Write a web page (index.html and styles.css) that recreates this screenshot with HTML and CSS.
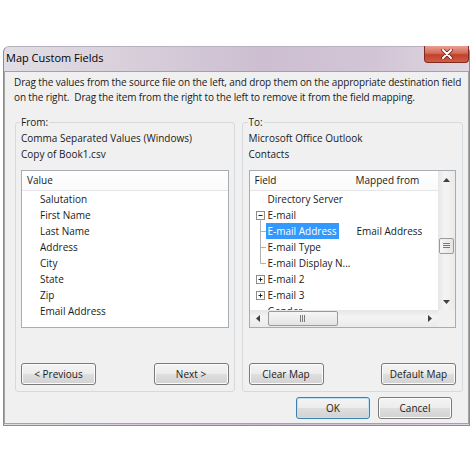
FILE: index.html
```html
<!DOCTYPE html>
<html>

<head>
    <meta charset="utf-8" />
    <title>Map Custom Fields</title>
    <meta name="viewport" content="width=device-width, initial-scale=1">
    <link rel="stylesheet" href="styles.css">
</head>

<body>
    <div class="window">
        <div class="titlebar">
            <span class="title">Map Custom Fields</span>
            <button class="close" title="Close">
                <svg width="12" height="10" viewBox="0 0 12 10">
                    <path d="M2 1 L10 9 M10 1 L2 9" stroke="#5b1b14" stroke-width="3.4" stroke-linecap="round" />
                    <path d="M2 1 L10 9 M10 1 L2 9" stroke="#fff" stroke-width="2" stroke-linecap="round" />
                </svg>
            </button>
        </div>

        <div class="client">
            <p class="intro">
                Drag the values from the source file on the left, and drop them on the appropriate destination field<br>
                on the right.&nbsp; Drag the item from the right to the left to remove it from the field mapping.
            </p>

            <div class="groups">
                <!-- source side -->
                <fieldset class="group group-from">
                    <legend>From:</legend>
                    <div class="source">Comma Separated Values (Windows)</div>
                    <div class="source">Copy of Book1.csv</div>
                    <div class="listbox values">
                        <div class="list-head">
                            <span class="head-cell">Value</span>
                        </div>
                        <ul class="items">
                            <li>Salutation</li>
                            <li>First Name</li>
                            <li>Last Name</li>
                            <li>Address</li>
                            <li>City</li>
                            <li>State</li>
                            <li>Zip</li>
                            <li>Email Address</li>
                        </ul>
                    </div>
                    <div class="group-buttons">
                        <button class="btn">&lt; Previous</button>
                        <button class="btn">Next &gt;</button>
                    </div>
                </fieldset>

                <!-- destination side -->
                <fieldset class="group group-to">
                    <legend>To:</legend>
                    <div class="source">Microsoft Office Outlook</div>
                    <div class="source">Contacts</div>
                    <div class="listbox tree">
                        <div class="tree-view">
                            <div class="list-head">
                                <span class="head-cell field-col">Field</span>
                                <span class="head-cell map-col">Mapped from</span>
                            </div>
                            <div class="row">
                                <div class="field-cell"><span class="twig"></span><span class="label">Directory Server</span></div>
                            </div>
                            <div class="row">
                                <div class="field-cell">
                                    <span class="twig">
                                        <svg width="12" height="16" viewBox="0 0 12 16">
                                            <rect x="2.5" y="4.5" width="8" height="8" fill="#fff" stroke="#8c8c8c" />
                                            <path d="M4.5 8.5 H8.5" stroke="#222" />
                                            <path d="M6.5 12.5 V16" stroke="#b0b0b0" />
                                        </svg>
                                    </span>
                                    <span class="label">E-mail</span>
                                </div>
                            </div>
                            <div class="row">
                                <div class="field-cell">
                                    <span class="twig">
                                        <svg width="12" height="16" viewBox="0 0 12 16">
                                            <path d="M6.5 0 V16 M6.5 8.5 H12" stroke="#b0b0b0" />
                                        </svg>
                                    </span>
                                    <span class="label selected">E-mail Address</span>
                                </div>
                                <div class="map-cell">Email Address</div>
                            </div>
                            <div class="row">
                                <div class="field-cell">
                                    <span class="twig">
                                        <svg width="12" height="16" viewBox="0 0 12 16">
                                            <path d="M6.5 0 V16 M6.5 8.5 H12" stroke="#b0b0b0" />
                                        </svg>
                                    </span>
                                    <span class="label">E-mail Type</span>
                                </div>
                            </div>
                            <div class="row">
                                <div class="field-cell">
                                    <span class="twig">
                                        <svg width="12" height="16" viewBox="0 0 12 16">
                                            <path d="M6.5 0 V8.5 H12" stroke="#b0b0b0" fill="none" />
                                        </svg>
                                    </span>
                                    <span class="label">E-mail Display N...</span>
                                </div>
                            </div>
                            <div class="row">
                                <div class="field-cell">
                                    <span class="twig">
                                        <svg width="12" height="16" viewBox="0 0 12 16">
                                            <rect x="2.5" y="4.5" width="8" height="8" fill="#fff" stroke="#8c8c8c" />
                                            <path d="M4.5 8.5 H8.5 M6.5 6.5 V10.5" stroke="#222" />
                                        </svg>
                                    </span>
                                    <span class="label">E-mail 2</span>
                                </div>
                            </div>
                            <div class="row">
                                <div class="field-cell">
                                    <span class="twig">
                                        <svg width="12" height="16" viewBox="0 0 12 16">
                                            <rect x="2.5" y="4.5" width="8" height="8" fill="#fff" stroke="#8c8c8c" />
                                            <path d="M4.5 8.5 H8.5 M6.5 6.5 V10.5" stroke="#222" />
                                        </svg>
                                    </span>
                                    <span class="label">E-mail 3</span>
                                </div>
                            </div>
                            <div class="row">
                                <div class="field-cell"><span class="twig"></span><span class="label">Gender</span></div>
                            </div>
                        </div>

                        <div class="vscroll">
                            <span class="arrow">
                                <svg width="7" height="4" viewBox="0 0 7 4"><path d="M0 4 L3.5 0 L7 4 Z" fill="#404040" /></svg>
                            </span>
                            <div class="track">
                                <span class="thumb thumb-v">
                                    <svg width="7" height="6" viewBox="0 0 7 6"><path d="M0 0.5 H7 M0 2.5 H7 M0 4.5 H7" stroke="#7a7a7a" /></svg>
                                </span>
                            </div>
                            <span class="arrow">
                                <svg width="7" height="4" viewBox="0 0 7 4"><path d="M0 0 L3.5 4 L7 0 Z" fill="#404040" /></svg>
                            </span>
                        </div>

                        <div class="hscroll">
                            <span class="arrow">
                                <svg width="4" height="7" viewBox="0 0 4 7"><path d="M4 0 L0 3.5 L4 7 Z" fill="#404040" /></svg>
                            </span>
                            <div class="track">
                                <span class="thumb thumb-h">
                                    <svg width="6" height="7" viewBox="0 0 6 7"><path d="M0.5 0 V7 M2.5 0 V7 M4.5 0 V7" stroke="#7a7a7a" /></svg>
                                </span>
                            </div>
                            <span class="arrow">
                                <svg width="4" height="7" viewBox="0 0 4 7"><path d="M0 0 L4 3.5 L0 7 Z" fill="#404040" /></svg>
                            </span>
                        </div>
                        <div class="corner"></div>
                    </div>
                    <div class="group-buttons">
                        <button class="btn">Clear Map</button>
                        <button class="btn">Default Map</button>
                    </div>
                </fieldset>
            </div>

            <div class="dialog-buttons">
                <button class="btn btn-default">OK</button>
                <button class="btn">Cancel</button>
            </div>
        </div>
    </div>
</body>

</html>
```

FILE: styles.css
```css
/* base */

* {
    box-sizing: border-box;
}

body {
    margin: 0;
    background: #fff;
    font-family: "Open Sans", "Noto Sans", sans-serif;
    font-size: 10px;
    color: #1a1a1a;
}

/* window frame */

.window {
    width: 467px;
    margin: 46px 0 0 3px;
    padding: 0 0 1px 0;
    border: 1px solid #8e8992;
    border-top-color: #b9b1bd;
    border-radius: 6px 6px 0 0;
    background: linear-gradient(90deg, #e1dde4 0%, #d9d0dc 25%, #cdbfd1 55%, #d2c5d6 80%, #dfd7e1 100%);
}

.titlebar {
    height: 24px;
    display: flex;
    justify-content: space-between;
    align-items: flex-start;
}

.title {
    padding-left: 2px;
    font-size: 11px;
    line-height: 22px;
    color: #000;
}

.close {
    width: 45px;
    height: 17px;
    margin: -1px 0 0 0;
    padding: 0;
    display: flex;
    align-items: center;
    justify-content: center;
    border: 1px solid #7f2b22;
    border-top: none;
    border-radius: 0 0 4px 4px;
    background: linear-gradient(#e7a092 0%, #d56a56 45%, #c3402b 55%, #cf5d45 100%);
}

/* client area */

.client {
    height: 353px;
    padding: 3px 5px 0 10px;
    display: flex;
    flex-direction: column;
    border: 1px solid #a3a3a3;
    background: #f0f0f0;
}

.intro {
    margin: 0 0 0 -1px;
    line-height: 15px;
    letter-spacing: -0.13px;
    white-space: nowrap;
}

.groups {
    height: 278px;
    margin-top: 9px;
    display: flex;
    gap: 7px;
}

.group {
    flex: 1;
    min-width: 0;
    margin: 0;
    padding: 0 5px 6px 5px;
    display: flex;
    flex-direction: column;
    border: 1px solid #d5dadf;
    border-radius: 3px;
}

.group-to {
    padding: 0 6px 6px 6px;
}

.group legend {
    margin-left: -1px;
    padding: 0 1px;
    line-height: 16px;
}

.source {
    line-height: 16px;
}

/* list boxes */

.listbox {
    margin-top: 8px;
    border: 1px solid #a9adb3;
    background: #fff;
}

.values {
    height: 158px;
}

.list-head {
    height: 20px;
    display: flex;
    border-bottom: 1px solid #e3e5e8;
    background: linear-gradient(#fff, #fafafa);
}

.head-cell {
    padding-left: 5px;
    line-height: 19px;
}

.items {
    margin: 0;
    padding: 0 0 0 18px;
    list-style: none;
    line-height: 16px;
}

/* field tree */

.tree {
    height: 158px;
    display: grid;
    grid-template-columns: 1fr 17px;
    grid-template-rows: 1fr 17px;
}

.tree-view {
    overflow: hidden;
}

.field-col {
    width: 100px;
}

.map-col {
    padding-left: 6px;
}

.row {
    height: 16px;
    display: flex;
    line-height: 16px;
}

.field-cell {
    width: 100px;
    padding-left: 4px;
    display: flex;
}

.twig {
    width: 12px;
    height: 16px;
    flex: none;
}

.twig svg {
    display: block;
}

.label {
    padding: 0 2px;
    white-space: nowrap;
}

.selected {
    background: #3399ff;
    color: #fff;
}

.map-cell {
    padding-left: 7px;
    white-space: nowrap;
}

/* scroll bars */

.vscroll,
.hscroll {
    display: flex;
}

.vscroll {
    flex-direction: column;
    background: linear-gradient(90deg, #e6e6e6, #f4f4f4 40%, #eaeaea);
}

.hscroll {
    background: linear-gradient(#e6e6e6, #f4f4f4 40%, #eaeaea);
}

.arrow {
    width: 17px;
    height: 17px;
    flex: none;
    display: flex;
    align-items: center;
    justify-content: center;
}

.track {
    flex: 1;
    display: flex;
}

.vscroll .track {
    flex-direction: column;
    align-items: center;
}

.thumb {
    display: flex;
    align-items: center;
    justify-content: center;
    border: 1px solid #9a9a9a;
    border-radius: 2px;
    background: linear-gradient(90deg, #f6f6f6, #e4e4e4);
}

.thumb-v {
    width: 15px;
    height: 16px;
    margin-top: 50px;
}

.thumb-h {
    width: 70px;
    height: 15px;
    margin: 1px 0 0 1px;
    background: linear-gradient(#f6f6f6, #e4e4e4);
}

.corner {
    background: #f0f0f0;
}

/* buttons */

.group-buttons {
    margin-top: auto;
    display: flex;
    justify-content: space-between;
}

.btn {
    width: 75px;
    height: 22px;
    padding: 0;
    border: 1px solid #7a7a7a;
    border-radius: 3px;
    background: linear-gradient(#f4f4f4 0%, #ececec 48%, #dedede 52%, #d2d2d2 100%);
    box-shadow: inset 0 0 0 1px #fbfbfb;
    font: inherit;
    color: #1a1a1a;
}

.btn-default {
    border-color: #3c7fb1;
    box-shadow: inset 0 0 0 1px #bfe3f6;
}

.dialog-buttons {
    margin: 5px 11px 0 0;
    display: flex;
    justify-content: flex-end;
    gap: 8px;
}

.dialog-buttons .btn {
    width: 74px;
}
```
